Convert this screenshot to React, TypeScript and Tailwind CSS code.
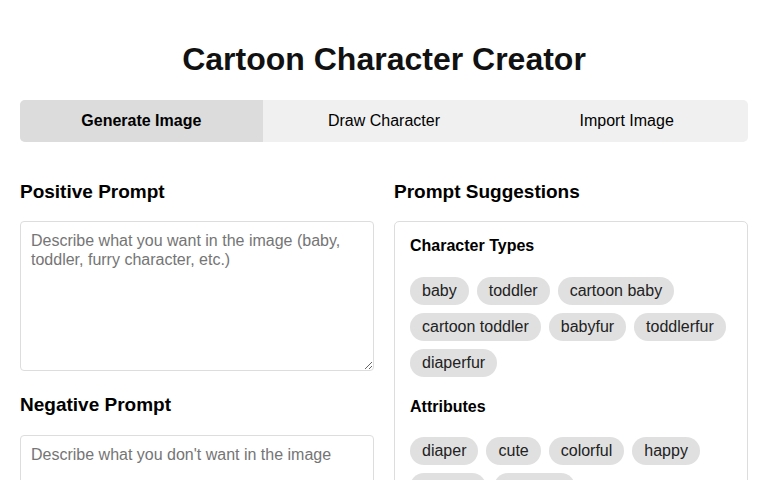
const CHARACTER_TYPES = ["baby", "toddler", "cartoon baby", "cartoon toddler", "babyfur", "toddlerfur", "diaperfur"];
const ATTRIBUTES = ["diaper", "cute", "colorful", "happy", "chubby", "cheerful"];

const TABS = ["Generate Image", "Draw Character", "Import Image"];

function Chips({ items }: { items: string[] }) {
  return (
    <div className="flex flex-wrap gap-x-2 gap-y-2">
      {items.map((t) => (
        <span key={t} className="rounded-full bg-[#e0e0e0] px-3 py-[5px] text-[16px] leading-[18px] text-[#222]">
          {t}
        </span>
      ))}
    </div>
  );
}

export default function App() {
  return (
    <div className="min-h-screen bg-white px-5 pt-[41px] text-black" style={{ fontFamily: '"Liberation Sans", Arial, sans-serif' }}>
      <h1 className="text-center text-[32px] font-bold leading-[37px] text-[#111]">Cartoon Character Creator</h1>

      <div className="mt-[22px] flex overflow-hidden rounded-[5px] bg-[#f0f0f0]">
        {TABS.map((t, i) => (
          <button
            key={t}
            className={`flex-1 py-3 text-[16px] leading-[18px] ${i === 0 ? "bg-[#dcdcdc] font-bold" : "font-normal"}`}
          >
            {t}
          </button>
        ))}
      </div>

      <div className="mt-[39px] grid grid-cols-2 gap-5">
        <div>
          <h3 className="text-[19px] font-bold leading-[22px]">Positive Prompt</h3>
          <textarea
            className="mt-[18px] block h-[150px] w-full resize-y rounded-[4px] border border-[#ddd] px-[10px] py-[9px] text-[16px] leading-[19px] placeholder:text-[#757575] outline-none"
            placeholder="Describe what you want in the image (baby, toddler, furry character, etc.)"
          />
          <h3 className="mt-[23px] text-[19px] font-bold leading-[22px]">Negative Prompt</h3>
          <textarea
            className="mt-[19px] block h-[100px] w-full resize-y rounded-[4px] border border-[#ddd] px-[10px] py-[9px] text-[16px] leading-[19px] placeholder:text-[#757575] outline-none"
            placeholder="Describe what you don't want in the image"
          />
        </div>

        <div>
          <h3 className="text-[19px] font-bold leading-[22px]">Prompt Suggestions</h3>
          <div className="mt-[18px] rounded-[5px] border border-[#ddd] px-[15px] pt-[15px] pb-[15px]">
            <h4 className="text-[16px] font-bold leading-[18px]">Character Types</h4>
            <div className="mt-[22px]">
              <Chips items={CHARACTER_TYPES} />
            </div>
            <h4 className="mt-[21px] text-[16px] font-bold leading-[18px]">Attributes</h4>
            <div className="mt-[21px]">
              <Chips items={ATTRIBUTES} />
            </div>
          </div>
        </div>
      </div>
    </div>
  );
}
